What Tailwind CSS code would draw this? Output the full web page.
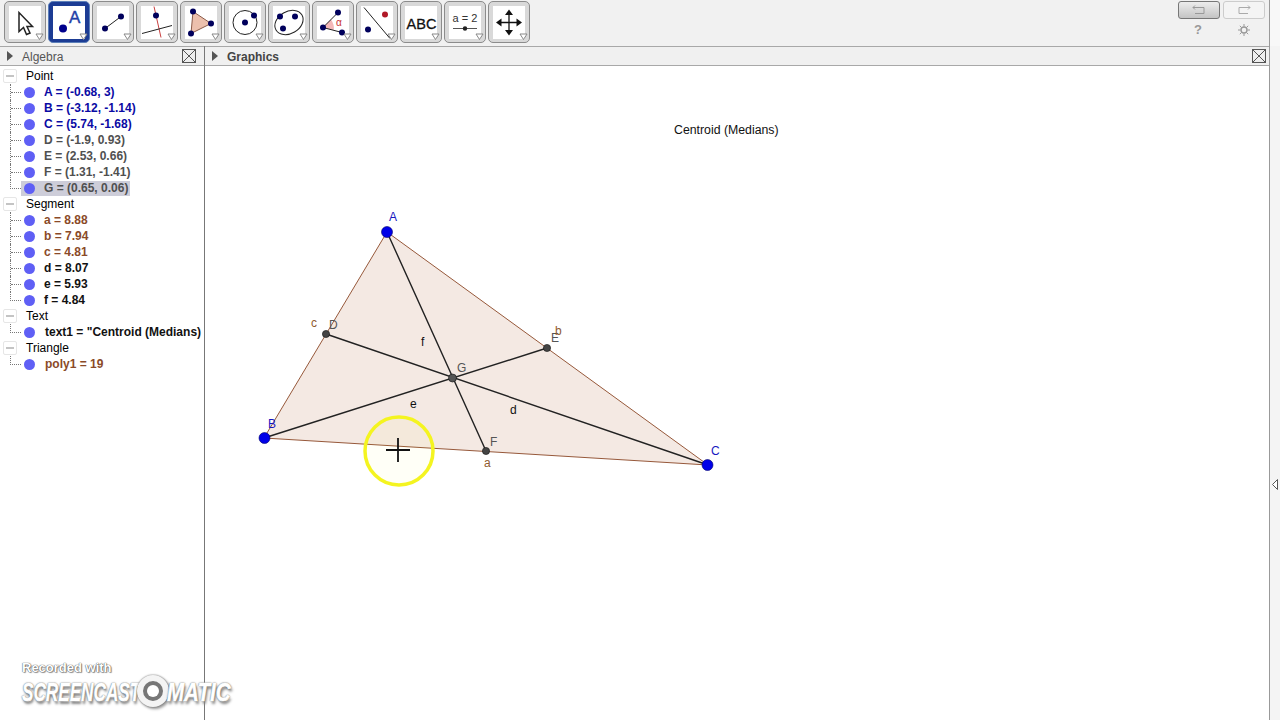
<!DOCTYPE html>
<html>
<head>
<meta charset="utf-8">
<script src="https://cdn.jsdelivr.net/npm/@tailwindcss/browser@4"></script>
</head>
<body class="relative w-[1280px] h-[720px] overflow-hidden bg-white font-['Liberation_Sans',sans-serif] text-[12px] text-black">

<!-- toolbar -->
<header class="h-[46px] flex bg-[#f1f1f1]">
  <div class="w-[1269px] flex justify-between pl-[4px] pt-[1px]">
    <div class="flex gap-[2px]">
      <div class="relative w-[42px] h-[42px] rounded-[5px] border border-[#8c8c8c] bg-[#d9d9d9] flex items-center justify-center">
        <svg viewBox="0 0 32 32" class="w-[32px] h-[33px] bg-white"><path d="M10 6V25L14.500 21L17.500 28L21 26.500L18 20H23.500Z" fill="#fff" stroke="#222" stroke-width="1.500"/></svg>
        <svg viewBox="0 0 9 7" class="absolute right-[1px] bottom-[2px] w-[9px] h-[7px]"><path d="M1 1H8L4.500 6.500Z" fill="#fff" stroke="#888"/></svg>
      </div>
      <div class="relative w-[42px] h-[42px] rounded-[5px] border border-[#5c7fb8] bg-[#1c3c94] flex items-center justify-center">
        <svg viewBox="0 0 32 32" class="w-[32px] h-[33px] bg-white"><circle cx="10" cy="22" r="4" fill="#00008c"/><text x="16" y="16" font-size="17" fill="#1f3fa8" stroke="#1f3fa8" stroke-width=".4" font-family="Liberation Sans">A</text></svg>
        <svg viewBox="0 0 9 7" class="absolute right-[1px] bottom-[2px] w-[9px] h-[7px]"><path d="M1 1H8L4.500 6.500Z" fill="#fff" stroke="#888"/></svg>
      </div>
      <div class="relative w-[42px] h-[42px] rounded-[5px] border border-[#8c8c8c] bg-[#d9d9d9] flex items-center justify-center">
        <svg viewBox="0 0 32 32" class="w-[32px] h-[33px] bg-white"><path d="M8 22L24 10" stroke="#222"/><circle cx="8" cy="22" r="3" fill="#00005c"/><circle cx="24" cy="10" r="3" fill="#00005c"/></svg>
        <svg viewBox="0 0 9 7" class="absolute right-[1px] bottom-[2px] w-[9px] h-[7px]"><path d="M1 1H8L4.500 6.500Z" fill="#fff" stroke="#888"/></svg>
      </div>
      <div class="relative w-[42px] h-[42px] rounded-[5px] border border-[#8c8c8c] bg-[#d9d9d9] flex items-center justify-center">
        <svg viewBox="0 0 32 32" class="w-[32px] h-[33px] bg-white"><path d="M13 0L20 31" stroke="#c84040"/><path d="M1 27L31 19" stroke="#222"/><circle cx="15" cy="9" r="3" fill="#00005c"/></svg>
        <svg viewBox="0 0 9 7" class="absolute right-[1px] bottom-[2px] w-[9px] h-[7px]"><path d="M1 1H8L4.500 6.500Z" fill="#fff" stroke="#888"/></svg>
      </div>
      <div class="relative w-[42px] h-[42px] rounded-[5px] border border-[#8c8c8c] bg-[#d9d9d9] flex items-center justify-center">
        <svg viewBox="0 0 32 32" class="w-[32px] h-[33px] bg-white"><path d="M8 5L26 17L6 27Z" fill="#ecc0ad" stroke="#8a5a48"/><circle cx="8" cy="5" r="3" fill="#00005c"/><circle cx="26" cy="17" r="3" fill="#00005c"/><circle cx="6" cy="27" r="3" fill="#00005c"/></svg>
        <svg viewBox="0 0 9 7" class="absolute right-[1px] bottom-[2px] w-[9px] h-[7px]"><path d="M1 1H8L4.500 6.500Z" fill="#fff" stroke="#888"/></svg>
      </div>
      <div class="relative w-[42px] h-[42px] rounded-[5px] border border-[#8c8c8c] bg-[#d9d9d9] flex items-center justify-center">
        <svg viewBox="0 0 32 32" class="w-[32px] h-[33px] bg-white"><circle cx="16" cy="16" r="12" fill="none" stroke="#222"/><circle cx="16" cy="16" r="3" fill="#00005c"/><circle cx="25" cy="9" r="3" fill="#00005c"/></svg>
        <svg viewBox="0 0 9 7" class="absolute right-[1px] bottom-[2px] w-[9px] h-[7px]"><path d="M1 1H8L4.500 6.500Z" fill="#fff" stroke="#888"/></svg>
      </div>
      <div class="relative w-[42px] h-[42px] rounded-[5px] border border-[#8c8c8c] bg-[#d9d9d9] flex items-center justify-center">
        <svg viewBox="0 0 32 32" class="w-[32px] h-[33px] bg-white"><ellipse cx="16" cy="16" rx="15" ry="11" transform="rotate(-30 16 16)" fill="none" stroke="#222"/><circle cx="7" cy="10" r="3" fill="#00005c"/><circle cx="22" cy="10" r="3" fill="#00005c"/><circle cx="10" cy="22" r="3" fill="#00005c"/></svg>
        <svg viewBox="0 0 9 7" class="absolute right-[1px] bottom-[2px] w-[9px] h-[7px]"><path d="M1 1H8L4.500 6.500Z" fill="#fff" stroke="#888"/></svg>
      </div>
      <div class="relative w-[42px] h-[42px] rounded-[5px] border border-[#8c8c8c] bg-[#d9d9d9] flex items-center justify-center">
        <svg viewBox="0 0 32 32" class="w-[32px] h-[33px] bg-white"><path d="M6 21L14 13Q18 19 16.500 23.500Z" fill="#f4b8b8"/><path d="M21 6L6 21L25 26" fill="none" stroke="#222"/><circle cx="21" cy="6" r="3" fill="#00005c"/><circle cx="6" cy="21" r="3" fill="#00005c"/><circle cx="25" cy="26" r="3" fill="#00005c"/><text x="19" y="19" font-size="10" fill="#c83030" font-family="Liberation Sans">α</text></svg>
        <svg viewBox="0 0 9 7" class="absolute right-[1px] bottom-[2px] w-[9px] h-[7px]"><path d="M1 1H8L4.500 6.500Z" fill="#fff" stroke="#888"/></svg>
      </div>
      <div class="relative w-[42px] h-[42px] rounded-[5px] border border-[#8c8c8c] bg-[#d9d9d9] flex items-center justify-center">
        <svg viewBox="0 0 32 32" class="w-[32px] h-[33px] bg-white"><path d="M3 1L29 32" stroke="#222"/><circle cx="7" cy="23" r="3" fill="#00005c"/><circle cx="24" cy="8" r="3" fill="#b01828"/></svg>
        <svg viewBox="0 0 9 7" class="absolute right-[1px] bottom-[2px] w-[9px] h-[7px]"><path d="M1 1H8L4.500 6.500Z" fill="#fff" stroke="#888"/></svg>
      </div>
      <div class="relative w-[42px] h-[42px] rounded-[5px] border border-[#8c8c8c] bg-[#d9d9d9] flex items-center justify-center">
        <svg viewBox="0 0 32 32" class="w-[32px] h-[33px] bg-white"><text x="16.500" y="22" font-size="14.500" text-anchor="middle" fill="#111" stroke="#111" stroke-width=".3" font-family="Liberation Sans">ABC</text></svg>
        <svg viewBox="0 0 9 7" class="absolute right-[1px] bottom-[2px] w-[9px] h-[7px]"><path d="M1 1H8L4.500 6.500Z" fill="#fff" stroke="#888"/></svg>
      </div>
      <div class="relative w-[42px] h-[42px] rounded-[5px] border border-[#8c8c8c] bg-[#d9d9d9] flex items-center justify-center">
        <svg viewBox="0 0 32 32" class="w-[32px] h-[33px] bg-white"><text x="16" y="15" font-size="11" text-anchor="middle" fill="#333" font-family="Liberation Sans">a = 2</text><path d="M4 22H28" stroke="#555"/><circle cx="16" cy="22" r="2.200" fill="#222"/></svg>
        <svg viewBox="0 0 9 7" class="absolute right-[1px] bottom-[2px] w-[9px] h-[7px]"><path d="M1 1H8L4.500 6.500Z" fill="#fff" stroke="#888"/></svg>
      </div>
      <div class="relative w-[42px] h-[42px] rounded-[5px] border border-[#8c8c8c] bg-[#d9d9d9] flex items-center justify-center">
        <svg viewBox="0 0 32 32" class="w-[32px] h-[33px] bg-white"><path d="M16 8V24M8 16H24" stroke="#111" stroke-width="1.300"/><path d="M16 3L20 8.500H12ZM16 29L20 23.500H12ZM3 16L8.500 12V20ZM29 16L23.500 12V20Z" fill="#111"/></svg>
        <svg viewBox="0 0 9 7" class="absolute right-[1px] bottom-[2px] w-[9px] h-[7px]"><path d="M1 1H8L4.500 6.500Z" fill="#fff" stroke="#888"/></svg>
      </div>
    </div>
    <div class="w-[87px] mr-[4px] flex flex-col">
      <div class="flex gap-[3px]">
        <div class="w-[42px] h-[18px] rounded-[3px] border border-[#777] bg-linear-to-b from-[#ededed] to-[#c4c4c4] flex items-center justify-center">
          <svg viewBox="0 0 14 10" class="w-[14px] h-[10px]"><path d="M3 .5L1 2.500L3 4.500M1 2.500H12V8.500H3" fill="none" stroke="#999"/></svg>
        </div>
        <div class="w-[42px] h-[18px] rounded-[3px] border border-[#ccc] bg-[#f4f4f4] flex items-center justify-center">
          <svg viewBox="0 0 14 10" class="w-[14px] h-[10px]"><path d="M11 .5L13 2.500L11 4.500M13 2.500H2V8.500H11" fill="none" stroke="#aaa"/></svg>
        </div>
      </div>
      <div class="flex mt-[3px] text-[#999]">
        <span class="w-[40px] shrink-0 text-center font-bold text-[13px] leading-[16px]">?</span>
        <span class="w-[52px] shrink-0 flex justify-center items-center">
          <svg viewBox="0 0 12 12" class="w-[12px] h-[12px]"><circle cx="6" cy="6" r="3" fill="none" stroke="#999" stroke-width="1.400"/><path d="M6 0V2.500M6 9.500V12M0 6H2.500M9.500 6H12M1.800 1.800L3.500 3.500M8.500 8.500L10.200 10.200M10.200 1.800L8.500 3.500M3.500 8.500L1.800 10.200" stroke="#999"/></svg>
        </span>
      </div>
    </div>
  </div>
  <div class="w-[11px] border-l border-[#999] bg-[#f8f8f8]"></div>
</header>

<main class="flex h-[674px]">
  <!-- algebra -->
  <aside class="w-[205px] border-r border-[#777] flex flex-col">
    <div class="h-[20px] flex items-center border-y border-[#a8a8a8] bg-[#f0f0f0] pl-[7px] pr-[8px] text-[#555]">
      <svg viewBox="0 0 6 10" class="w-[6px] h-[10px]"><path d="M0 0L6 5L0 10Z" fill="#555"/></svg>
      <span class="ml-[9px] flex-1 pt-[2px]">Algebra</span>
      <svg viewBox="0 0 14 14" class="w-[14px] h-[14px]"><rect x=".5" y=".5" width="13" height="13" fill="#eee" stroke="#555"/><path d="M1 1L13 13M13 1L1 13" stroke="#555"/></svg>
    </div>
    <div class="pt-[2px] leading-[16px]">

      <div class="h-[16px] flex items-center">
        <span class="ml-[3px] w-[14px] h-[14px] border border-[#e6e6e6] rounded-[2px] flex items-center justify-center"><span class="w-[8px] h-[2px] bg-[#c4c4c4]"></span></span>
        <span class="ml-[9px]">Point</span>
      </div>
      <div class="h-[16px] flex items-center pl-[10px]"><span class="w-[11px] self-stretch border-l border-dotted border-[#777]"><span class="block mt-[8px] border-t border-dotted border-[#777]"></span></span><span class="h-[15px] flex items-center pl-[3px] pr-[1px]"><span class="w-[11px] h-[11px] rounded-full bg-[#5f5ff5]"></span><span class="ml-[9px] font-bold text-[#0a0aa4]">A = (-0.68, 3)</span></span></div>
      <div class="h-[16px] flex items-center pl-[10px]"><span class="w-[11px] self-stretch border-l border-dotted border-[#777]"><span class="block mt-[8px] border-t border-dotted border-[#777]"></span></span><span class="h-[15px] flex items-center pl-[3px] pr-[1px]"><span class="w-[11px] h-[11px] rounded-full bg-[#5f5ff5]"></span><span class="ml-[9px] font-bold text-[#0a0aa4]">B = (-3.12, -1.14)</span></span></div>
      <div class="h-[16px] flex items-center pl-[10px]"><span class="w-[11px] self-stretch border-l border-dotted border-[#777]"><span class="block mt-[8px] border-t border-dotted border-[#777]"></span></span><span class="h-[15px] flex items-center pl-[3px] pr-[1px]"><span class="w-[11px] h-[11px] rounded-full bg-[#5f5ff5]"></span><span class="ml-[9px] font-bold text-[#0a0aa4]">C = (5.74, -1.68)</span></span></div>
      <div class="h-[16px] flex items-center pl-[10px]"><span class="w-[11px] self-stretch border-l border-dotted border-[#777]"><span class="block mt-[8px] border-t border-dotted border-[#777]"></span></span><span class="h-[15px] flex items-center pl-[3px] pr-[1px]"><span class="w-[11px] h-[11px] rounded-full bg-[#5f5ff5]"></span><span class="ml-[9px] font-bold text-[#505050]">D = (-1.9, 0.93)</span></span></div>
      <div class="h-[16px] flex items-center pl-[10px]"><span class="w-[11px] self-stretch border-l border-dotted border-[#777]"><span class="block mt-[8px] border-t border-dotted border-[#777]"></span></span><span class="h-[15px] flex items-center pl-[3px] pr-[1px]"><span class="w-[11px] h-[11px] rounded-full bg-[#5f5ff5]"></span><span class="ml-[9px] font-bold text-[#505050]">E = (2.53, 0.66)</span></span></div>
      <div class="h-[16px] flex items-center pl-[10px]"><span class="w-[11px] self-stretch border-l border-dotted border-[#777]"><span class="block mt-[8px] border-t border-dotted border-[#777]"></span></span><span class="h-[15px] flex items-center pl-[3px] pr-[1px]"><span class="w-[11px] h-[11px] rounded-full bg-[#5f5ff5]"></span><span class="ml-[9px] font-bold text-[#505050]">F = (1.31, -1.41)</span></span></div>
      <div class="h-[16px] flex items-center pl-[10px]"><span class="w-[11px] h-[9px] self-start border-l border-b border-dotted border-[#777]"></span><span class="h-[15px] flex items-center pl-[3px] pr-[2px] bg-[#cdcdd9]"><span class="w-[11px] h-[11px] rounded-full bg-[#5f5ff5]"></span><span class="ml-[9px] font-bold text-[#505050]">G = (0.65, 0.06)</span></span></div>

      <div class="h-[16px] flex items-center">
        <span class="ml-[3px] w-[14px] h-[14px] border border-[#e6e6e6] rounded-[2px] flex items-center justify-center"><span class="w-[8px] h-[2px] bg-[#c4c4c4]"></span></span>
        <span class="ml-[9px]">Segment</span>
      </div>
      <div class="h-[16px] flex items-center pl-[10px]"><span class="w-[11px] self-stretch border-l border-dotted border-[#777]"><span class="block mt-[8px] border-t border-dotted border-[#777]"></span></span><span class="h-[15px] flex items-center pl-[3px] pr-[1px]"><span class="w-[11px] h-[11px] rounded-full bg-[#5f5ff5]"></span><span class="ml-[9px] font-bold text-[#8a4a28]">a = 8.88</span></span></div>
      <div class="h-[16px] flex items-center pl-[10px]"><span class="w-[11px] self-stretch border-l border-dotted border-[#777]"><span class="block mt-[8px] border-t border-dotted border-[#777]"></span></span><span class="h-[15px] flex items-center pl-[3px] pr-[1px]"><span class="w-[11px] h-[11px] rounded-full bg-[#5f5ff5]"></span><span class="ml-[9px] font-bold text-[#8a4a28]">b = 7.94</span></span></div>
      <div class="h-[16px] flex items-center pl-[10px]"><span class="w-[11px] self-stretch border-l border-dotted border-[#777]"><span class="block mt-[8px] border-t border-dotted border-[#777]"></span></span><span class="h-[15px] flex items-center pl-[3px] pr-[1px]"><span class="w-[11px] h-[11px] rounded-full bg-[#5f5ff5]"></span><span class="ml-[9px] font-bold text-[#8a4a28]">c = 4.81</span></span></div>
      <div class="h-[16px] flex items-center pl-[10px]"><span class="w-[11px] self-stretch border-l border-dotted border-[#777]"><span class="block mt-[8px] border-t border-dotted border-[#777]"></span></span><span class="h-[15px] flex items-center pl-[3px] pr-[1px]"><span class="w-[11px] h-[11px] rounded-full bg-[#5f5ff5]"></span><span class="ml-[9px] font-bold text-[#111]">d = 8.07</span></span></div>
      <div class="h-[16px] flex items-center pl-[10px]"><span class="w-[11px] self-stretch border-l border-dotted border-[#777]"><span class="block mt-[8px] border-t border-dotted border-[#777]"></span></span><span class="h-[15px] flex items-center pl-[3px] pr-[1px]"><span class="w-[11px] h-[11px] rounded-full bg-[#5f5ff5]"></span><span class="ml-[9px] font-bold text-[#111]">e = 5.93</span></span></div>
      <div class="h-[16px] flex items-center pl-[10px]"><span class="w-[11px] h-[9px] self-start border-l border-b border-dotted border-[#777]"></span><span class="h-[15px] flex items-center pl-[3px] pr-[1px]"><span class="w-[11px] h-[11px] rounded-full bg-[#5f5ff5]"></span><span class="ml-[9px] font-bold text-[#111]">f = 4.84</span></span></div>

      <div class="h-[16px] flex items-center">
        <span class="ml-[3px] w-[14px] h-[14px] border border-[#e6e6e6] rounded-[2px] flex items-center justify-center"><span class="w-[8px] h-[2px] bg-[#c4c4c4]"></span></span>
        <span class="ml-[9px]">Text</span>
      </div>
      <div class="h-[16px] flex items-center pl-[10px]"><span class="w-[11px] h-[9px] self-start border-l border-b border-dotted border-[#777]"></span><span class="h-[15px] flex items-center pl-[3px] pr-[1px]"><span class="w-[11px] h-[11px] rounded-full bg-[#5f5ff5]"></span><span class="ml-[10px] font-bold text-[#111] whitespace-nowrap">text1 = "Centroid (Medians)</span></span></div>

      <div class="h-[16px] flex items-center">
        <span class="ml-[3px] w-[14px] h-[14px] border border-[#e6e6e6] rounded-[2px] flex items-center justify-center"><span class="w-[8px] h-[2px] bg-[#c4c4c4]"></span></span>
        <span class="ml-[9px]">Triangle</span>
      </div>
      <div class="h-[16px] flex items-center pl-[10px]"><span class="w-[11px] h-[9px] self-start border-l border-b border-dotted border-[#777]"></span><span class="h-[15px] flex items-center pl-[3px] pr-[1px]"><span class="w-[11px] h-[11px] rounded-full bg-[#5f5ff5]"></span><span class="ml-[10px] font-bold text-[#8a4a28]">poly1 = 19</span></span></div>
    </div>
  </aside>

  <!-- graphics -->
  <section class="w-[1064px] flex flex-col">
    <div class="h-[20px] flex items-center border-y border-[#a8a8a8] bg-[#f0f0f0] pl-[7px] pr-[3px]">
      <svg viewBox="0 0 6 10" class="w-[6px] h-[10px]"><path d="M0 0L6 5L0 10Z" fill="#555"/></svg>
      <span class="ml-[9px] flex-1 font-bold text-[#444] pt-[2px]">Graphics</span>
      <svg viewBox="0 0 14 14" class="w-[14px] h-[14px]"><rect x=".5" y=".5" width="13" height="13" fill="#eee" stroke="#555"/><path d="M1 1L13 13M13 1L1 13" stroke="#555"/></svg>
    </div>
    <svg viewBox="205 66 1064 654" class="w-[1064px] h-[654px] bg-white" font-family="Liberation Sans" font-size="12">
      <path d="M387 232L708 465L264 438Z" fill="#f4e9e3"/>
      <path d="M387 232L708 465L264 438Z" fill="none" stroke="#96583a" stroke-width="1"/>
      <path d="M387 232L486 451M264 438L547 348M708 465L326 334" fill="none" stroke="#222" stroke-width="1.400"/>
      <circle cx="387" cy="232" r="5.500" fill="#0000e8" stroke="#00006a" stroke-width=".6"/>
      <circle cx="264.500" cy="438" r="5.500" fill="#0000e8" stroke="#00006a" stroke-width=".6"/>
      <circle cx="707.500" cy="465" r="5.500" fill="#0000e8" stroke="#00006a" stroke-width=".6"/>
      <circle cx="326" cy="334" r="3.600" fill="#444" stroke="#111" stroke-width=".6"/>
      <circle cx="547" cy="348" r="3.600" fill="#444" stroke="#111" stroke-width=".6"/>
      <circle cx="486" cy="451" r="3.600" fill="#444" stroke="#111" stroke-width=".6"/>
      <circle cx="452.500" cy="378" r="4" fill="#555" stroke="#111" stroke-width=".6"/>
      <g fill="#1616c0">
        <text x="389" y="221">A</text><text x="268" y="428">B</text><text x="711" y="455">C</text>
      </g>
      <g fill="#555">
        <text x="329" y="329">D</text><text x="551" y="342">E</text><text x="490" y="446">F</text><text x="457" y="372">G</text>
      </g>
      <g fill="#8f5a2e">
        <text x="311" y="327">c</text><text x="555" y="335">b</text><text x="484" y="467">a</text>
      </g>
      <g fill="#111">
        <text x="510" y="414">d</text><text x="410" y="408">e</text><text x="421" y="346">f</text>
        <text x="674" y="134" font-size="12.300">Centroid (Medians)</text>
      </g>
      <circle cx="399" cy="451" r="34" fill="#ffff00" fill-opacity=".03" stroke="#f4f420" stroke-width="3.500"/>
      <path d="M398 438V462M386 450H410" stroke="#111" stroke-width="1.800"/>
    </svg>
  </section>

  <!-- right strip -->
  <div class="w-[11px] border-l border-[#999] bg-[#f4f4f4] flex items-center justify-center">
    <svg viewBox="0 0 6 11" class="w-[6px] h-[11px] mt-[202px]"><path d="M5.500 .5V10.500L.5 5.500Z" fill="#fff" stroke="#555"/></svg>
  </div>
</main>

<!-- watermark overlay -->
<div class="absolute left-[22px] top-[660px] w-[215px] h-[50px] text-white">
  <div class="font-bold text-[13px] leading-[15px] [text-shadow:0_0_1px_#555,0_0_1px_#555,1px_1px_1px_#999]">Recorded with</div>
  <div class="relative h-[36px] font-bold italic text-[26px] leading-[30px] [-webkit-text-stroke:0.7px_#fff] [text-shadow:0_0_2px_#444,0_0_1px_#444,2px_3px_3px_#888]">
    <span class="absolute left-0 top-[2px] origin-left scale-x-[0.66] whitespace-nowrap">SCREENCAST</span>
    <span class="absolute left-[115px] top-0 w-[32px] h-[32px] rounded-full bg-[#777] border-[6px] border-[#f4f4f4] shadow-[0_0_2px_#666,2px_2px_3px_#999] flex items-center justify-center"><span class="w-[12px] h-[12px] rounded-full bg-white"></span></span>
    <span class="absolute left-[145px] top-[2px] origin-left scale-x-[0.79] whitespace-nowrap">MATIC</span>
  </div>
</div>
</body>
</html>
